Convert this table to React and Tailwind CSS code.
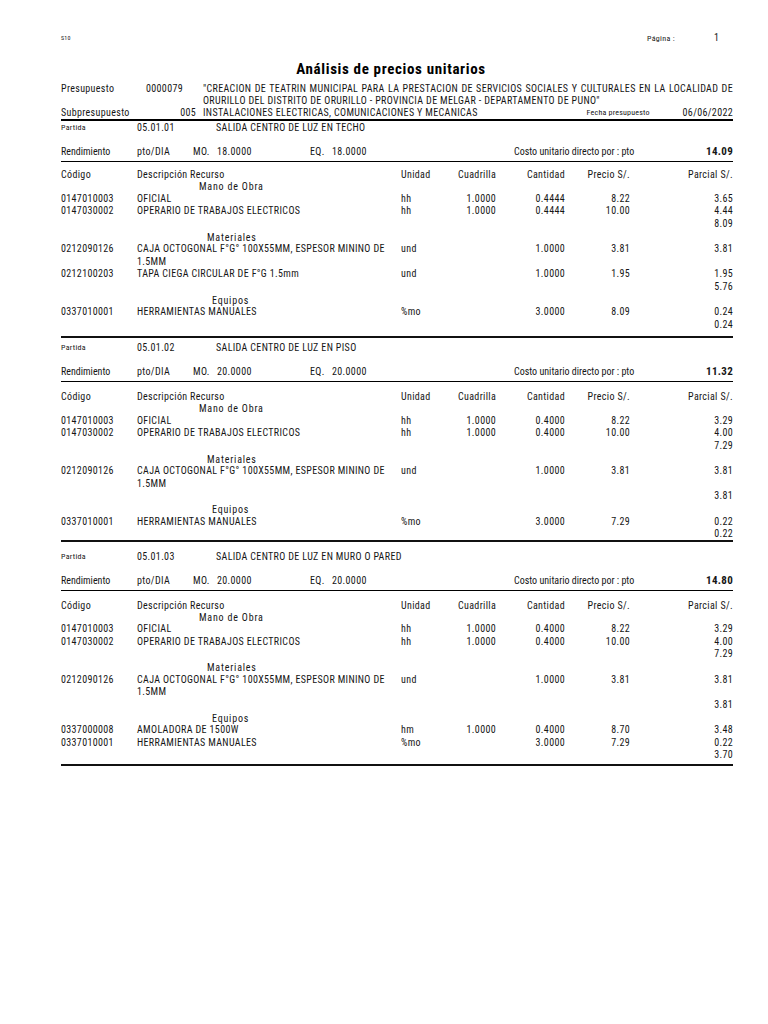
import React from "react";

const blocks = [
  {
    partida: "05.01.01",
    desc: "SALIDA CENTRO DE LUZ EN TECHO",
    mo: "18.0000",
    eq: "18.0000",
    costo: "14.09",
    top: "mt-[0px]",
    headTop: "mt-[7px]",
    bottom: "mt-[5px]",
    groups: [
      {
        name: "Mano de Obra",
        pos: "pl-[62px]",
        rows: [
          ["0147010003", "OFICIAL", "hh", "1.0000", "0.4444", "8.22", "3.65"],
          ["0147030002", "OPERARIO DE TRABAJOS ELECTRICOS", "hh", "1.0000", "0.4444", "10.00", "4.44"],
        ],
        total: "8.09",
      },
      {
        name: "Materiales",
        pos: "pl-[70px]",
        rows: [
          ["0212090126", "CAJA OCTOGONAL F°G° 100X55MM, ESPESOR MININO DE 1.5MM", "und", "", "1.0000", "3.81", "3.81"],
          ["0212100203", "TAPA CIEGA CIRCULAR DE F°G 1.5mm", "und", "", "1.0000", "1.95", "1.95"],
        ],
        total: "5.76",
      },
      {
        name: "Equipos",
        pos: "pl-[75px]",
        rows: [["0337010001", "HERRAMIENTAS MANUALES", "%mo", "", "3.0000", "8.09", "0.24"]],
        total: "0.24",
      },
    ],
  },
  {
    partida: "05.01.02",
    desc: "SALIDA CENTRO DE LUZ EN PISO",
    mo: "20.0000",
    eq: "20.0000",
    costo: "11.32",
    top: "mt-[3px]",
    headTop: "mt-[9px]",
    bottom: "-mt-[1px]",
    groups: [
      {
        name: "Mano de Obra",
        pos: "pl-[62px]",
        rows: [
          ["0147010003", "OFICIAL", "hh", "1.0000", "0.4000", "8.22", "3.29"],
          ["0147030002", "OPERARIO DE TRABAJOS ELECTRICOS", "hh", "1.0000", "0.4000", "10.00", "4.00"],
        ],
        total: "7.29",
      },
      {
        name: "Materiales",
        pos: "pl-[70px]",
        rows: [["0212090126", "CAJA OCTOGONAL F°G° 100X55MM, ESPESOR MININO DE 1.5MM", "und", "", "1.0000", "3.81", "3.81"]],
        total: "3.81",
      },
      {
        name: "Equipos",
        pos: "pl-[75px]",
        rows: [["0337010001", "HERRAMIENTAS MANUALES", "%mo", "", "3.0000", "7.29", "0.22"]],
        total: "0.22",
      },
    ],
  },
  {
    partida: "05.01.03",
    desc: "SALIDA CENTRO DE LUZ EN MURO O PARED",
    mo: "20.0000",
    eq: "20.0000",
    costo: "14.80",
    top: "mt-[8px]",
    headTop: "mt-[9px]",
    bottom: "mt-[2px]",
    groups: [
      {
        name: "Mano de Obra",
        pos: "pl-[62px]",
        rows: [
          ["0147010003", "OFICIAL", "hh", "1.0000", "0.4000", "8.22", "3.29"],
          ["0147030002", "OPERARIO DE TRABAJOS ELECTRICOS", "hh", "1.0000", "0.4000", "10.00", "4.00"],
        ],
        total: "7.29",
      },
      {
        name: "Materiales",
        pos: "pl-[70px]",
        rows: [["0212090126", "CAJA OCTOGONAL F°G° 100X55MM, ESPESOR MININO DE 1.5MM", "und", "", "1.0000", "3.81", "3.81"]],
        total: "3.81",
      },
      {
        name: "Equipos",
        pos: "pl-[75px]",
        rows: [
          ["0337000008", "AMOLADORA DE 1500W", "hm", "1.0000", "0.4000", "8.70", "3.48"],
          ["0337010001", "HERRAMIENTAS MANUALES", "%mo", "", "3.0000", "7.29", "0.22"],
        ],
        total: "3.70",
      },
    ],
  },
];

const GRID = "grid grid-cols-[76px_264px_57px_38px_69px_65px_1fr]";

function ResRow({ r }) {
  return (
    <div className={`${GRID} leading-[12.5px]`}>
      <div>{r[0]}</div>
      <div className="w-[256px]">{r[1]}</div>
      <div>{r[2]}</div>
      <div className="text-right">{r[3]}</div>
      <div className="text-right">{r[4]}</div>
      <div className="text-right">{r[5]}</div>
      <div className="text-right">{r[6]}</div>
    </div>
  );
}

function Block({ b }) {
  return (
    <div>
      <div className={`${b.top} flex h-[14px] items-center leading-[14px]`}>
        <div className="w-[76px] text-[8px] tracking-[0.3px]">Partida</div>
        <div className="w-[79px]">{b.partida}</div>
        <div>{b.desc}</div>
      </div>
      <div className="mt-[11px] flex h-[12px] items-center leading-[12px]">
        <div className="w-[76px] tracking-[0px]">Rendimiento</div>
        <div className="w-[56px]">pto/DIA</div>
        <div className="w-[24px]">MO.</div>
        <div className="w-[93px]">{b.mo}</div>
        <div className="w-[22px]">EQ.</div>
        <div className="w-[182px]">{b.eq}</div>
        <div className="flex-1 tracking-[0px]">Costo unitario directo por : pto</div>
        <div className="text-[11px] font-bold tracking-[0.3px]">{b.costo}</div>
      </div>
      <div className="mt-[3px] h-[1px] bg-black" />
      <div className={`${b.headTop} ${GRID} leading-[12px]`}>
        <div>Código</div>
        <div>Descripción Recurso</div>
        <div>Unidad</div>
        <div className="text-right">Cuadrilla</div>
        <div className="text-right">Cantidad</div>
        <div className="text-right">Precio S/.</div>
        <div className="text-right">Parcial S/.</div>
      </div>
      {b.groups.map((g, gi) => (
        <div key={gi}>
          <div className={`${gi > 0 ? "mt-[1.5px]" : ""} leading-[11.5px]`}>
            <div className={`ml-[76px] ${g.pos} tracking-[0.8px]`}>{g.name}</div>
          </div>
          {g.rows.map((r, ri) => (
            <ResRow key={ri} r={r} />
          ))}
          <div className="text-right leading-[12.5px]">{g.total}</div>
        </div>
      ))}
      <div className={`${b.bottom} h-[2px] bg-[#111]`} />
    </div>
  );
}

export default function App() {
  return (
    <div className="min-h-[1024px] w-[768px] bg-white pl-[61px] pr-[35px] pt-[31px] font-['Roboto_Condensed','Liberation_Sans',sans-serif] text-[10px] tracking-[0.35px] text-[#161616]">
      <div className="flex h-[12px] items-center">
        <div className="flex-1 text-[6px] tracking-[0.2px]">S10</div>
        <div className="w-[67px] pt-[3px] text-[8px] tracking-[0.3px]">Página :</div>
        <div className="w-[19px] pt-[1px] text-[10px]">1</div>
      </div>
      <div className="mt-[17px] pr-[12px] text-center text-[15px] font-bold leading-[18px] tracking-[0.65px] text-black">
        Análisis de precios unitarios
      </div>
      <div className="mt-[5px] flex leading-[12px]">
        <div className="w-[85px]">Presupuesto</div>
        <div className="w-[57px]">0000079</div>
        <div className="flex-1">
          <div className="text-justify [text-align-last:justify]">
            "CREACION DE TEATRIN MUNICIPAL PARA LA PRESTACION DE SERVICIOS SOCIALES Y CULTURALES EN LA LOCALIDAD DE
          </div>
          <div>ORURILLO DEL DISTRITO DE ORURILLO - PROVINCIA DE MELGAR - DEPARTAMENTO DE PUNO"</div>
        </div>
      </div>
      <div className="flex h-[12px] items-center leading-[12px]">
        <div className="w-[85px]">Subpresupuesto</div>
        <div className="w-[50px] text-right">005</div>
        <div className="ml-[7px] flex-1">INSTALACIONES ELECTRICAS, COMUNICACIONES Y MECANICAS</div>
        <div className="w-[96px] text-[8px] tracking-[0.2px]">Fecha presupuesto</div>
        <div>06/06/2022</div>
      </div>
      <div className="h-[2px] bg-black" />
      {blocks.map((b, i) => (
        <Block key={i} b={b} />
      ))}
    </div>
  );
}
